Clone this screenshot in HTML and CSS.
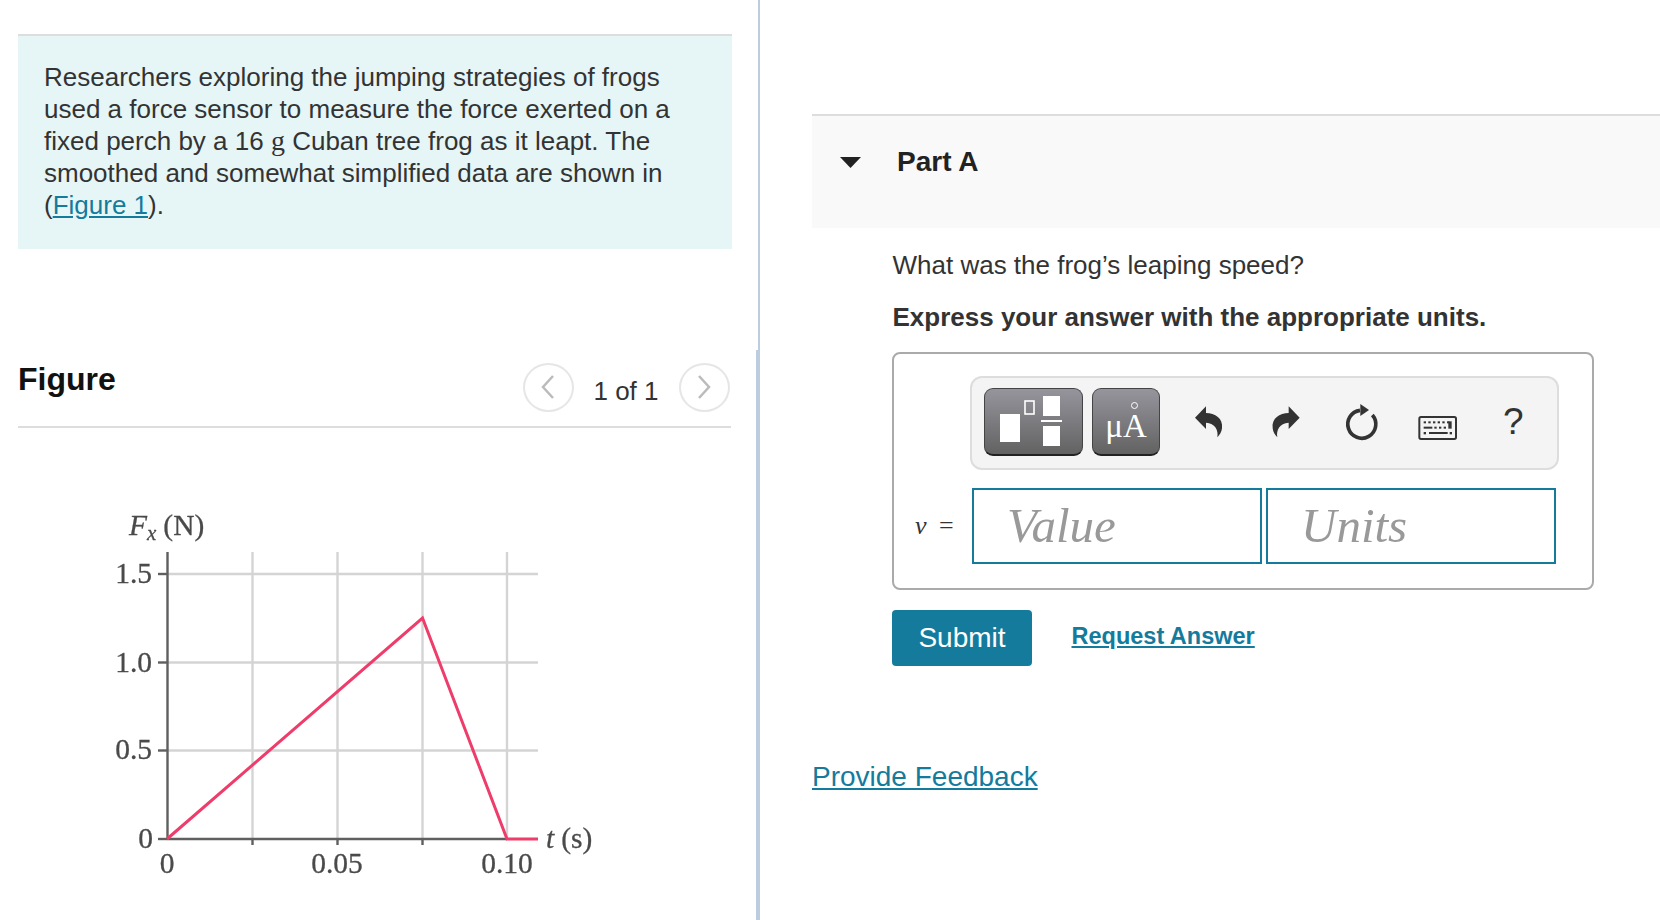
FILE: index.html
```html
<!DOCTYPE html>
<html lang="en">
<head>
  <meta charset="UTF-8">
  <title>Part A</title>
  <link rel="stylesheet" href="styles.css">
</head>
<body>
  <div class="page">
    <div class="left-pane">
      <div class="rail"></div>
      <div class="intro">
        Researchers exploring the jumping strategies of frogs used a force sensor to measure the force exerted on a fixed perch by a 16 <span class="unit">g</span> Cuban tree frog as it leapt. The smoothed and somewhat simplified data are shown in (<a href="#">Figure 1</a>).
      </div>
      <div class="figure-head">
        <h2>Figure</h2>
        <div class="pager">
          <span class="circle">
            <svg width="16" height="26" viewBox="0 0 16 26"><path d="M13 2 L3 13 L13 24" fill="none" stroke="#bbb" stroke-width="2.5"/></svg>
          </span>
          <span class="count">1 of 1</span>
          <span class="circle">
            <svg width="16" height="26" viewBox="0 0 16 26"><path d="M3 2 L13 13 L3 24" fill="none" stroke="#bbb" stroke-width="2.5"/></svg>
          </span>
        </div>
      </div>
      <svg class="chart" width="520" height="400" viewBox="100 490 520 400">
        <g stroke="#d4d4d4" stroke-width="2.4">
          <line x1="167" y1="574" x2="538" y2="574"/>
          <line x1="167" y1="662.5" x2="538" y2="662.5"/>
          <line x1="167" y1="750.5" x2="538" y2="750.5"/>
          <line x1="252.5" y1="552" x2="252.5" y2="838"/>
          <line x1="337.5" y1="552" x2="337.5" y2="838"/>
          <line x1="422.5" y1="552" x2="422.5" y2="838"/>
          <line x1="507" y1="552" x2="507" y2="838"/>
        </g>
        <g stroke="#5f5f5f" stroke-width="2.4">
          <line x1="167.5" y1="552" x2="167.5" y2="840"/>
          <line x1="167" y1="839" x2="507" y2="839"/>
          <line x1="158" y1="574" x2="167" y2="574"/>
          <line x1="158" y1="662.5" x2="167" y2="662.5"/>
          <line x1="158" y1="750.5" x2="167" y2="750.5"/>
          <line x1="158" y1="839" x2="167" y2="839"/>
          <line x1="252.5" y1="839" x2="252.5" y2="845"/>
          <line x1="337.5" y1="839" x2="337.5" y2="845"/>
          <line x1="422.5" y1="839" x2="422.5" y2="845"/>
        </g>
        <polyline points="167,839 422.5,618 507,839 538,839" fill="none" stroke="#ee3d6b" stroke-width="3"/>
        <g class="chart-text">
          <text x="129" y="535" class="ital">F<tspan class="sub" dy="5">x</tspan><tspan class="rom" dy="-5" dx="7">(N)</tspan></text>
          <text x="152" y="583" text-anchor="end">1.5</text>
          <text x="152" y="672" text-anchor="end">1.0</text>
          <text x="152" y="759" text-anchor="end">0.5</text>
          <text x="153" y="848" text-anchor="end">0</text>
          <text x="167" y="873" text-anchor="middle">0</text>
          <text x="337" y="873" text-anchor="middle">0.05</text>
          <text x="507" y="873" text-anchor="middle">0.10</text>
          <text x="546" y="848" class="ital">t<tspan class="rom" dx="7">(s)</tspan></text>
        </g>
      </svg>
    </div>

    <div class="right-pane">
      <div class="part-head">
        <svg width="21" height="11" viewBox="0 0 21 11"><path d="M0 0 H21 L10.5 11 Z" fill="#222"/></svg>
        <span>Part A</span>
      </div>
      <div class="part-body">
        <p class="question">What was the frog’s leaping speed?</p>
        <p class="bold">Express your answer with the appropriate units.</p>
        <div class="answer">
          <div class="toolbar">
            <button class="tpl tpl-wide">
              <svg width="99" height="68" viewBox="984 388 99 68">
                <rect x="1000" y="414" width="20" height="28" fill="#fff"/>
                <rect x="1025" y="401" width="9" height="13" fill="none" stroke="#fff" stroke-width="1.6"/>
                <rect x="1043" y="396" width="17" height="20" fill="#fff"/>
                <rect x="1041" y="420" width="21" height="2" fill="#fff"/>
                <rect x="1043" y="426" width="17" height="20" fill="#fff"/>
              </svg>
            </button>
            <button class="tpl tpl-units">μA</button>
            <div class="tool">
              <svg width="76.5" height="52" viewBox="-30 33 229.5 156"><path d="M45 98 L78 64 L78 84 C105 84 130 100 126 130 C125 142 118 150 112 157 C116 135 105 115 78 113 L78 132 Z" fill="#333"/></svg>
            </div>
            <div class="tool">
              <svg width="76.5" height="52" viewBox="-30 33 229.5 156"><path d="M45 98 L78 64 L78 84 C105 84 130 100 126 130 C125 142 118 150 112 157 C116 135 105 115 78 113 L78 132 Z" fill="#333" transform="translate(173 0) scale(-1 1)"/></svg>
            </div>
            <div class="tool">
              <svg width="76.5" height="52" viewBox="431 33 229.5 156">
                <path d="M542 76 A42 42 0 1 0 579 90" fill="none" stroke="#333" stroke-width="11"/>
                <path d="M543 57 L569 75 L543 93 Z" fill="#333"/>
              </svg>
            </div>
            <div class="tool tool-keys">
              <svg width="76.5" height="52" viewBox="661 33 229.5 156">
                <rect x="719" y="93" width="110" height="66" rx="5" fill="none" stroke="#333" stroke-width="6"/>
                <g fill="#333">
                  <rect x="732" y="106" width="7" height="6"/><rect x="746" y="106" width="7" height="6"/><rect x="760" y="106" width="7" height="6"/><rect x="774" y="106" width="7" height="6"/><rect x="788" y="106" width="7" height="6"/><rect x="802" y="106" width="7" height="6"/>
                  <rect x="732" y="122" width="26" height="6"/><rect x="764" y="122" width="7" height="6"/><rect x="778" y="122" width="7" height="6"/><rect x="792" y="122" width="7" height="6"/><rect x="806" y="106" width="10" height="22"/>
                  <rect x="732" y="138" width="7" height="7"/><rect x="748" y="138" width="56" height="6"/><rect x="810" y="138" width="7" height="7"/>
                </g>
              </svg>
            </div>
            <div class="tool tool-help">?</div>
          </div>
          <div class="answer-row">
            <span class="var"><i>v</i> =</span>
            <input class="field" type="text" placeholder="Value">
            <input class="field" type="text" placeholder="Units">
          </div>
        </div>
        <div class="actions">
          <button class="submit">Submit</button>
          <a class="request" href="#">Request Answer</a>
        </div>
      </div>
      <a class="feedback" href="#">Provide Feedback</a>
    </div>
  </div>
</body>
</html>
```

FILE: styles.css
```css
html, body {
    margin: 0;
    padding: 0;
    background-color: #fff;
}
body {
    font-family: "Liberation Sans", Arial, sans-serif;
    font-size: 26px;
    line-height: 31.8px;
    color: #333;
    overflow: hidden;
}
a {
    color: #147b9c;
}
.page {
    display: flex;
    height: 920px;
    overflow: hidden;
}

/* left column */
.left-pane {
    position: relative;
    box-sizing: border-box;
    width: 760px;
    padding: 34px 26px 0 18px;
    border-right: 2px solid #bccde0;
}
.rail {
    position: absolute;
    top: 350px;
    bottom: 0;
    right: 0;
    width: 2px;
    background-color: #bccde0;
}
.intro {
    border-top: 2px solid #ddd;
    background-color: #e6f6f7;
    padding: 26px 26px 27px 26px;
    line-height: 31.9px;
}
.unit {
    font-family: "Liberation Serif", serif;
    font-size: 28px;
    line-height: 20px;
}
.figure-head {
    display: flex;
    justify-content: space-between;
    align-items: center;
    margin-top: 112px;
    margin-right: 1.5px;
    padding: 0 1px 14px 0;
    border-bottom: 2px solid #ddd;
}
.figure-head h2 {
    margin: 0;
    padding-bottom: 14px;
    font-size: 32px;
    line-height: 36px;
    color: #111;
}
.pager {
    display: flex;
    align-items: center;
    margin-top: 2px;
}
.circle {
    display: flex;
    align-items: center;
    justify-content: center;
    box-sizing: border-box;
    width: 51px;
    height: 49px;
    border: 2px solid #e6e6e6;
    border-radius: 50%;
}
.count {
    width: 105px;
    text-align: center;
    padding-top: 10px;
}
.chart {
    display: block;
    margin: 62px 0 0 82px;
    filter: blur(0.35px);
}
.chart-text {
    font-family: "Liberation Serif", serif;
    font-size: 29.5px;
    fill: #4a4a4a;
    stroke: #4a4a4a;
    stroke-width: 0.3px;
}
.chart-text .ital {
    font-style: italic;
}
.chart-text .rom {
    font-style: normal;
}
.chart-text .sub {
    font-size: 21px;
}

/* right column */
.right-pane {
    flex: 1;
    padding: 114px 0 0 52px;
}
.part-head {
    display: flex;
    align-items: center;
    gap: 36px;
    box-sizing: border-box;
    height: 114px;
    padding: 0 0 20px 28px;
    border-top: 2px solid #ddd;
    background-color: #f9f9f9;
    font-weight: 700;
    font-size: 28px;
    color: #222;
}
.part-body {
    padding-left: 80.5px;
}
.part-body p {
    margin: 0;
}
.part-body .question {
    margin-top: 22px;
}
.part-body .bold {
    margin: 20px 0 18px 0;
    font-weight: 700;
}
.answer {
    box-sizing: border-box;
    width: 701.5px;
    height: 238px;
    margin-left: -0.5px;
    padding: 22px 0 0 21px;
    border: 2px solid #aaa;
    border-radius: 8px;
}
.toolbar {
    display: flex;
    align-items: center;
    box-sizing: border-box;
    width: 589px;
    height: 94px;
    margin-left: 55px;
    padding: 0 0 2px 12px;
    border: 2px solid #ddd;
    border-radius: 12px;
    background-color: #f4f4f4;
}
.tpl {
    flex: none;
    height: 68px;
    padding: 0;
    border: 1px solid #444;
    border-bottom: 2px solid #222;
    border-radius: 9px;
    background: linear-gradient(#96959d, #626262);
    color: #fff;
}
.tpl svg {
    display: block;
    margin: -1px;
}
.tpl-wide {
    width: 99px;
    overflow: hidden;
}
.tpl-units {
    position: relative;
    width: 68px;
    margin: 0 10px 0 9px;
    font-family: "Liberation Serif", serif;
    font-size: 33px;
    line-height: 32px;
    padding-top: 10px;
}
/* the ring of the angstrom sits well above the A in this toolbar */
.tpl-units::after {
    content: "";
    position: absolute;
    left: 38px;
    top: 13px;
    box-sizing: border-box;
    width: 7px;
    height: 7px;
    border: 1.4px solid #fff;
    border-radius: 50%;
}
.tool {
    flex: none;
    width: 76.5px;
    height: 52px;
    text-align: center;
}
.tool-keys {
    padding-top: 2px;
}
.tool-help {
    font-size: 37px;
    line-height: 52px;
    color: #333;
    margin-left: -1px;
}
.answer-row {
    display: flex;
    align-items: center;
    gap: 4px;
    margin-top: 18px;
}
.var {
    width: 53px;
    font-family: "Liberation Serif", serif;
    font-size: 26px;
    word-spacing: 6px;
}
.field {
    box-sizing: border-box;
    width: 290px;
    height: 76px;
    padding: 0 0 0 33px;
    border: 2px solid #147b9c;
    border-radius: 0;
    outline: none;
    font-family: "Liberation Serif", serif;
    font-style: italic;
    font-size: 49px;
}
.field::placeholder {
    color: #999;
    opacity: 1;
}
.actions {
    display: flex;
    align-items: flex-start;
    gap: 39.5px;
    margin: 20px 0 0 -0.5px;
}
.submit {
    width: 140px;
    height: 56px;
    border: none;
    border-radius: 4px;
    background-color: #147b9c;
    color: #fff;
    font-family: "Liberation Sans", Arial, sans-serif;
    font-size: 28px;
}
.request {
    margin-top: 11px;
    font-weight: 700;
    font-size: 23.5px;
}
.feedback {
    display: inline-block;
    margin-top: 95px;
    font-size: 28px;
}
```
